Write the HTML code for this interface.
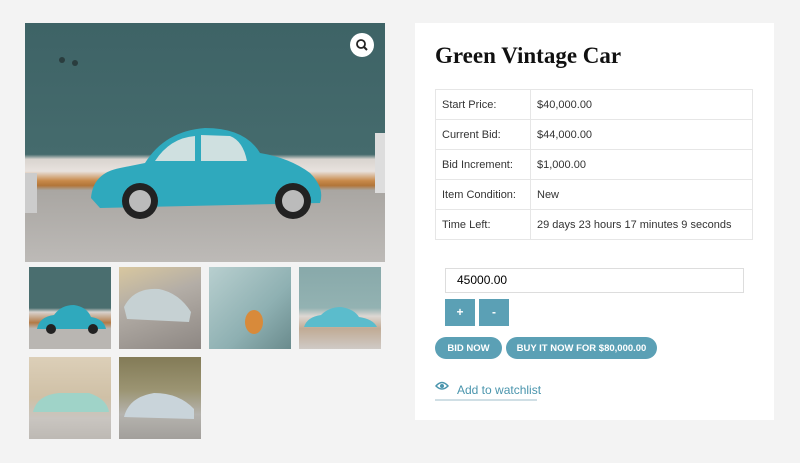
<!DOCTYPE html>
<html><head><style>
body{margin:0;width:800px;height:463px;background:#f3f3f3;font-family:"Liberation Sans",sans-serif;position:relative;overflow:hidden}
.main{position:absolute;left:25px;top:23px;width:360px;height:239px;overflow:hidden;background:linear-gradient(#3e6366 0,#456b6d 55%,#d9d4cf 57%,#e8e2de 62%,#c88a4a 66%,#b27538 68%,#a9a6a2 70%,#bdbab7 100%)}
.zoom{position:absolute;width:24px;height:24px;border-radius:50%;background:#fff}
.th{position:absolute;width:82px;height:82px;overflow:hidden}
.panel{position:absolute;left:415px;top:23px;width:359px;height:397px;background:#fff}
h1{position:absolute;left:20px;top:20px;margin:0;font-family:"Liberation Serif",serif;font-size:23px;font-weight:bold;color:#111}
table{position:absolute;left:20px;top:66px;width:318px;border-collapse:collapse;font-size:11px;color:#333}
td{border:1px solid #e6e6e6;height:29px;padding:0 0 0 6px;white-space:nowrap}
td:first-child{width:88px}
.inp{position:absolute;left:30px;top:245px;height:25px;border:1px solid #ddd;font-size:12px;line-height:23px;padding-left:11px;box-sizing:border-box;width:299px}
.sq{position:absolute;top:276px;width:30px;height:27px;background:#5ba0b5;color:#fff;font-weight:bold;font-size:12px;text-align:center;line-height:27px}
.pill{position:absolute;top:314px;height:22px;border-radius:11px;background:#5ba0b5;color:#fff;font-weight:bold;font-size:9.5px;display:flex;align-items:center;justify-content:center;white-space:nowrap}
.wl{position:absolute;left:20px;top:357px;width:102px;border-bottom:2px solid #d0dfe5;height:19px;color:#4a95ad;font-size:12px;white-space:nowrap}
</style></head><body>
<div class="main">
<svg width="360" height="239" style="position:absolute;left:0;top:0">
<circle cx="37" cy="37" r="3" fill="#2a3d3e"/><circle cx="50" cy="40" r="3" fill="#2a3d3e"/>
<path d="M66 175 Q68 150 95 145 L120 140 Q140 108 180 105 Q220 105 235 130 Q265 135 285 150 Q300 165 295 180 L75 185 Z" fill="#2fa9bd"/>
<path d="M130 138 Q145 115 170 113 L170 138Z M176 112 L205 113 Q218 118 222 138 L176 138Z" fill="#cfe0e0"/>
<circle cx="115" cy="178" r="18" fill="#222"/><circle cx="115" cy="178" r="11" fill="#bbb"/>
<circle cx="268" cy="178" r="18" fill="#222"/><circle cx="268" cy="178" r="11" fill="#bbb"/>
<rect x="0" y="150" width="12" height="40" fill="#ccc"/><rect x="350" y="110" width="10" height="60" fill="#ddd"/>
</svg>
<div class="zoom" style="left:325px;top:10px"><svg width="24" height="24"><circle cx="11" cy="11" r="4" fill="none" stroke="#222" stroke-width="1.8"/><path d="M14 14 L17 17" stroke="#222" stroke-width="2"/></svg></div>
</div>
<div class="th" style="left:29px;top:267px;background:linear-gradient(#4a6e6f 0,#4a6e6f 50%,#d8d2ce 55%,#b27a46 68%,#b9b6b2 75%)"><svg width="82" height="82"><path d="M8 62 Q10 50 25 48 Q32 38 45 38 Q58 40 62 50 Q75 52 77 62Z" fill="#2fa9bd"/><circle cx="22" cy="62" r="5" fill="#222"/><circle cx="64" cy="62" r="5" fill="#222"/></svg></div>
<div class="th" style="left:119px;top:267px;background:linear-gradient(160deg,#d8c79f 0,#b3ada6 40%,#8d8783 100%)"><svg width="82" height="82"><path d="M5 40 Q15 20 40 22 Q60 26 72 45 L70 55 L8 52Z" fill="#c6d1d3"/></svg></div>
<div class="th" style="left:209px;top:267px;background:linear-gradient(135deg,#b8cfcf,#8eb0b2 60%,#6a8b8d)"><svg width="82" height="82"><ellipse cx="45" cy="55" rx="9" ry="12" fill="#d88a3a"/></svg></div>
<div class="th" style="left:299px;top:267px;background:linear-gradient(#88a9aa 0,#93b2b2 50%,#ddd7d3 60%,#c1ab95 75%,#cfcac6)"><svg width="82" height="82"><path d="M5 60 Q8 50 22 48 Q30 40 42 40 Q55 42 60 50 Q74 52 78 60Z" fill="#5bbccc"/></svg></div>
<div class="th" style="left:29px;top:357px;background:linear-gradient(#dccfb8 0,#cfc0a6 50%,#c9c5c0 75%,#bdb9b4)"><svg width="82" height="82"><path d="M4 55 Q8 38 30 36 L60 36 Q78 42 80 55Z" fill="#9fd3c8"/></svg></div>
<div class="th" style="left:119px;top:357px;background:linear-gradient(#837b57 0,#9b9472 40%,#b5b3ae 70%,#a29f9b)"><svg width="82" height="82"><path d="M5 60 Q10 40 35 36 Q60 36 75 52 L75 62Z" fill="#c9d4da"/></svg></div>
<div class="panel">
<h1>Green Vintage Car</h1>
<table>
<tr><td>Start Price:</td><td>$40,000.00</td></tr>
<tr><td>Current Bid:</td><td>$44,000.00</td></tr>
<tr><td>Bid Increment:</td><td>$1,000.00</td></tr>
<tr><td>Item Condition:</td><td>New</td></tr>
<tr><td>Time Left:</td><td>29 days 23 hours 17 minutes 9 seconds</td></tr>
</table>
<div class="inp">45000.00</div>
<div class="sq" style="left:30px">+</div>
<div class="sq" style="left:64px">-</div>
<div class="pill" style="left:20px;width:67px">BID NOW</div>
<div class="pill" style="left:91px;width:151px">BUY IT NOW FOR $80,000.00</div>
<div class="wl"><svg width="14" height="10" style="position:absolute;left:0;top:1px"><path d="M1 5 Q7 -2 13 5 Q7 11 1 5Z" fill="none" stroke="#4a95ad" stroke-width="1.5"/><circle cx="7" cy="5" r="2" fill="#4a95ad"/></svg><span style="position:absolute;left:22px;top:3px">Add to watchlist</span></div>
</div>
</body></html>
